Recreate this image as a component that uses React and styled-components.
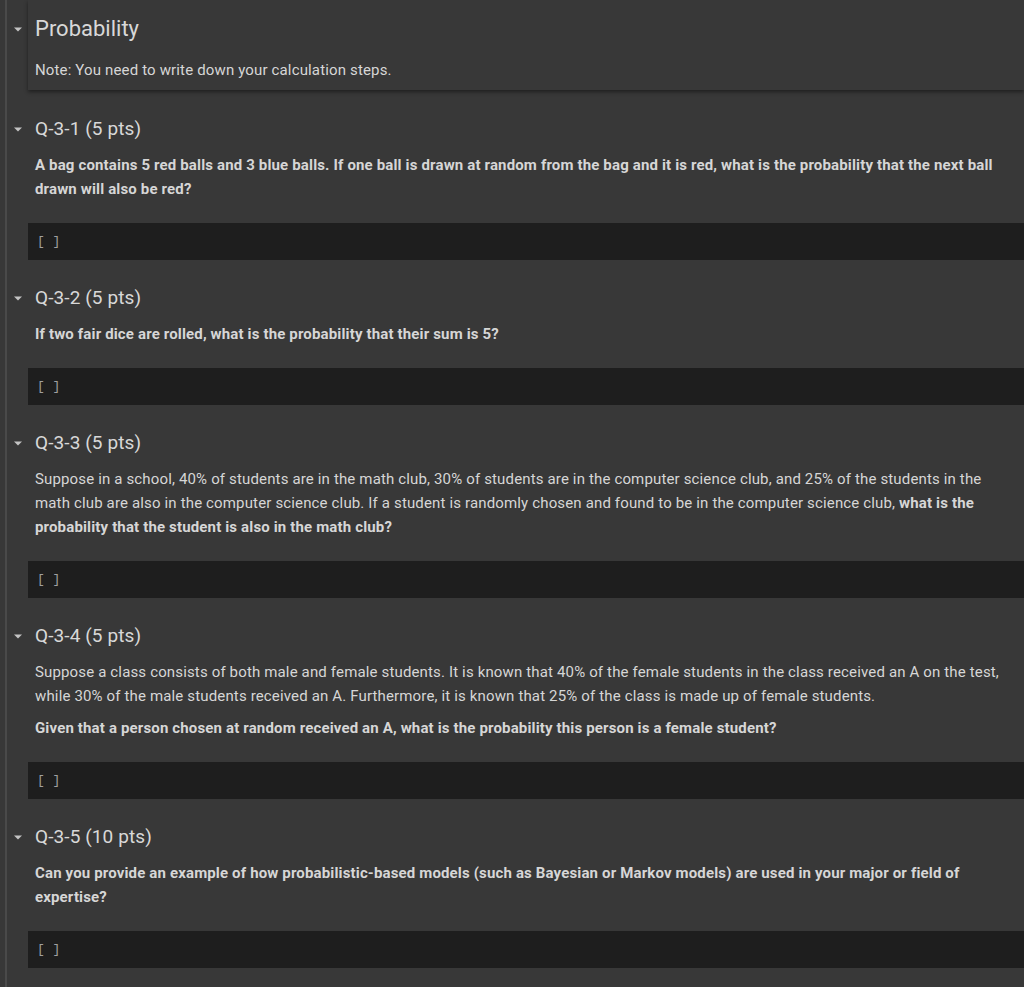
import React from 'react';
import styled, { createGlobalStyle } from 'styled-components';

const GlobalStyle = createGlobalStyle`
  body {
    margin: 0;
    background: #383838;
    font-family: Roboto, "Noto Sans", sans-serif;
    color: #d6d6d6;
  }
`;

const Notebook = styled.div`
  margin-left: 5px;
  border-left: 2px solid #4a4a4a;
  min-height: 100vh;
  padding-bottom: 30px;
  box-sizing: border-box;
`;

const Section = styled.div`
  display: flex;
  margin-top: ${props => props.gap || 0}px;
`;

const Toggle = styled.div`
  width: 21px;
  flex: none;
  height: ${props => props.h || 28}px;
  margin-top: ${props => props.top || 0}px;
  display: flex;
  align-items: center;
  justify-content: center;
`;

const Body = styled.div`
  flex: 1;
  min-width: 0;
`;

const HeaderBox = styled.div`
  padding: 13px 14px 8px 7px;
  box-shadow: 0 2px 4px rgba(0, 0, 0, 0.45);
`;

const Title = styled.div`
  font-size: 22px;
  line-height: 32px;
  color: #d8d8d8;
`;

const Note = styled.div`
  margin-top: 13px;
  font-size: 15px;
  letter-spacing: 0.15px;
  line-height: 24px;
`;

const Heading = styled.div`
  padding-left: 7px;
  font-size: 19px;
  letter-spacing: 0.1px;
  line-height: 28px;
  color: #d8d8d8;
`;

const Text = styled.div`
  margin-top: 10px;
  padding: 0 14px 0 7px;
`;

const Para = styled.p`
  margin: 0;
  font-size: 15px;
  letter-spacing: 0.15px;
  line-height: 24px;
  & + & {
    margin-top: 8px;
  }
`;

const CodeCell = styled.div`
  margin-top: 22px;
  height: 37px;
  background: #1e1e1e;
  display: flex;
  align-items: center;
  padding-left: 9px;
  font-family: "Liberation Mono", "DejaVu Sans Mono", monospace;
  font-size: 13px;
  color: #a0a0a0;
  white-space: pre;
`;

const Arrow = () => (
  <svg width="8" height="5" viewBox="0 0 8 5">
    <path d="M0 0.5 L8 0.5 L4 4.5 Z" fill="#c4c4c4" />
  </svg>
);

const questions = [
  {
    title: 'Q-3-1 (5 pts)',
    paras: [
      [{ b: true, t: 'A bag contains 5 red balls and 3 blue balls. If one ball is drawn at random from the bag and it is red, what is the probability that the next ball drawn will also be red?' }],
    ],
  },
  {
    title: 'Q-3-2 (5 pts)',
    paras: [[{ b: true, t: 'If two fair dice are rolled, what is the probability that their sum is 5?' }]],
  },
  {
    title: 'Q-3-3 (5 pts)',
    paras: [
      [
        { t: 'Suppose in a school, 40% of students are in the math club, 30% of students are in the computer science club, and 25% of the students in the math club are also in the computer science club. If a student is randomly chosen and found to be in the computer science club, ' },
        { b: true, t: 'what is the probability that the student is also in the math club?' },
      ],
    ],
  },
  {
    title: 'Q-3-4 (5 pts)',
    paras: [
      [{ t: 'Suppose a class consists of both male and female students. It is known that 40% of the female students in the class received an A on the test, while 30% of the male students received an A. Furthermore, it is known that 25% of the class is made up of female students.' }],
      [{ b: true, t: 'Given that a person chosen at random received an A, what is the probability this person is a female student?' }],
    ],
  },
  {
    title: 'Q-3-5 (10 pts)',
    paras: [
      [{ b: true, t: 'Can you provide an example of how probabilistic-based models (such as Bayesian or Markov models) are used in your major or field of expertise?' }],
    ],
  },
];

const App = () => {
  return (
    <>
      <GlobalStyle />
      <Notebook>
        <Section>
          <Toggle h={32} top={13}>
            <Arrow />
          </Toggle>
          <Body>
            <HeaderBox>
              <Title>Probability</Title>
              <Note>Note: You need to write down your calculation steps.</Note>
            </HeaderBox>
          </Body>
        </Section>
        {questions.map((q, i) => (
          <Section key={q.title} gap={i === 0 ? 25 : 24}>
            <Toggle>
              <Arrow />
            </Toggle>
            <Body>
              <Heading>{q.title}</Heading>
              <Text>
                {q.paras.map((p, j) => (
                  <Para key={j}>
                    {p.map((s, k) => (s.b ? <b key={k}>{s.t}</b> : <span key={k}>{s.t}</span>))}
                  </Para>
                ))}
              </Text>
              <CodeCell>[ ]</CodeCell>
            </Body>
          </Section>
        ))}
      </Notebook>
    </>
  );
};

export default App;
